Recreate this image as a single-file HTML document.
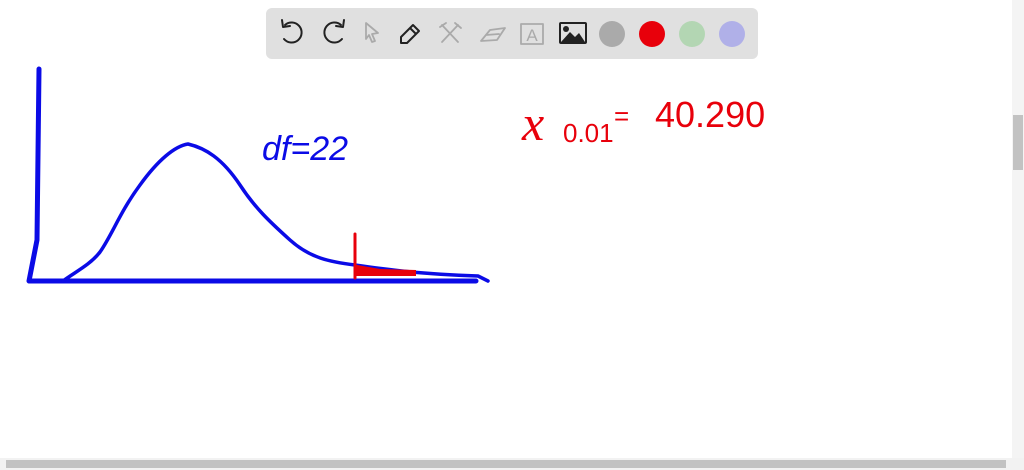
<!DOCTYPE html>
<html><head><meta charset="utf-8"><style>
html,body{margin:0;padding:0;width:1024px;height:470px;overflow:hidden;background:#fff;font-family:"Liberation Sans",sans-serif}
.tb{position:absolute;left:266px;top:8px;width:492px;height:51px;background:#e0e0e0;border-radius:6px}
.vs{position:absolute;left:1012px;top:0;width:12px;height:458px;background:#f4f4f4}
.hs{position:absolute;left:0;top:458px;width:1024px;height:12px;background:#f2f2f2}
</style></head><body>
<div class="vs"></div><div class="hs"></div>
<div class="tb"></div>
<svg width="1024" height="470" style="position:absolute;left:0;top:0">
<g fill="none" stroke="#222" stroke-width="2" stroke-linecap="round" stroke-linejoin="round">
<path d="M285 25 A10 10 0 1 1 284 39"/><path d="M282 20 L283 27 L290 26"/>
<path d="M341 25 A10 10 0 1 0 342 39"/><path d="M344 20 L343 27 L336 26"/>
<path d="M401 43 L401 37 L413 25 L419 31 L407 43 Z M410 28 L416 34"/>
<rect x="560" y="23" width="26" height="20" rx="1"/>
</g>
<g fill="none" stroke="#aaa" stroke-width="1.8" stroke-linecap="round" stroke-linejoin="round">
<path d="M366 23 L378 33 L372 34 L375 41 L372 42 L369 35 L366 39 Z"/>
<path d="M442 25 L458 42 M458 25 L442 42 M440 27 L446 23 M455 23 L461 28"/>
<path d="M481 41 L490 30 L505 28 L497 40 Z M486 35 L499 34"/>
<rect x="521" y="24" width="22" height="20"/>
</g>
<text x="532" y="41" font-size="17" fill="#aaa" text-anchor="middle">A</text>
<circle cx="566" cy="29" r="3" fill="#222"/>
<path d="M561 42 L570 32 L575 37 L579 33 L585 42 Z" fill="#222"/>
<circle cx="612" cy="34" r="13" fill="#aaa"/>
<circle cx="652" cy="34" r="13" fill="#e8000b"/>
<circle cx="692" cy="34" r="13" fill="#b3d6b3"/>
<circle cx="732" cy="34" r="13" fill="#b0b0e8"/>
<g fill="none" stroke="#0b0be6" stroke-width="5" stroke-linecap="round" stroke-linejoin="round">
<path d="M39 69 L37 240 L29 281 L476 281"/>
<path d="M63 281 C75 272 90 265 100 252 C112 235 120 212 140 185 C158 160 175 146 188 144 C205 148 222 158 240 185 C255 208 270 222 290 240 C310 258 330 262 355 265 C390 270 420 274 478 276 L488 281" stroke-width="3.5"/>
</g>
<g stroke="#e8000b" fill="#e8000b" stroke-linecap="round">
<path d="M355 234 L355 278" stroke-width="3" fill="none"/>
<path d="M357 266 L380 270 L415 271 L415 275 L357 275 Z" stroke-width="2"/>
</g>
<text x="262" y="160" font-size="34" fill="#0b0be6" font-style="italic">df=22</text>
<text x="522" y="140" font-size="50" fill="#e8000b" font-style="italic" font-family="Liberation Serif,serif">x</text>
<text x="563" y="142" font-size="26" fill="#e8000b">0.01</text>
<text x="614" y="125" font-size="26" fill="#e8000b">=</text>
<text x="655" y="127" font-size="36" fill="#e8000b">40.290</text>
<rect x="1013" y="115" width="10" height="55" fill="#c2c2c2"/>
<rect x="6" y="460" width="1000" height="8" fill="#c2c2c2"/>
</svg>
</body></html>
